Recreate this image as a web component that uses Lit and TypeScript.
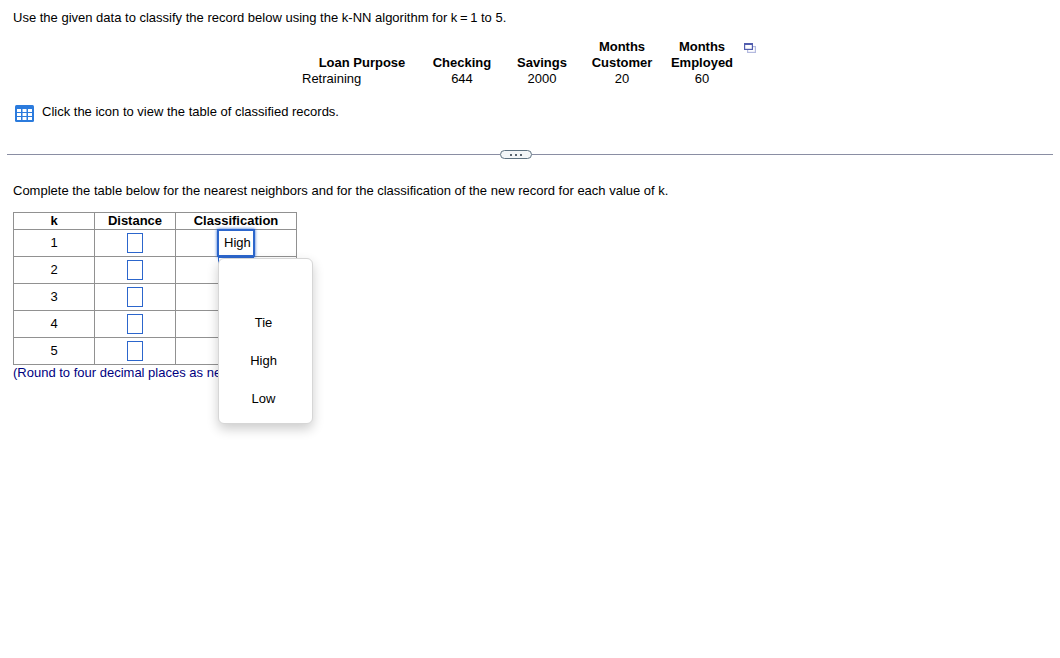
import { LitElement, html, css } from "lit";
import { customElement, state } from "lit/decorators.js";
import { classMap } from "lit/directives/class-map.js";

const OPTIONS = ["", "Tie", "High", "Low"];

@customElement("answer-select")
class AnswerSelect extends LitElement {
  static properties = {
    value: { type: String },
    label: { type: String },
    open: { type: Boolean },
  };
  declare value: string;
  declare label: string;
  declare open: boolean;

  constructor() {
    super();
    this.value = "";
    this.label = "";
    this.open = false;
  }

  static styles = css`
    :host {
      display: block;
      position: relative;
      width: 36px;
      margin: 0 auto;
    }
    .field {
      display: block;
      appearance: none;
      box-sizing: border-box;
      width: 100%;
      height: 26px;
      margin: 0;
      padding: 0 0 0 5px;
      border: 1px solid #2c66cc;
      border-radius: 0;
      background: #fff;
      color: #000;
      font: inherit;
      outline: none;
    }
    .field.open {
      box-shadow: 0 0 0 1px #2c66cc, 0 0 3px 1px #2c66cc;
    }
    .menu {
      position: absolute;
      z-index: 2;
      top: 28px;
      left: 0;
      box-sizing: border-box;
      width: 95px;
      padding: 6px 0;
      border: 1px solid #d6d6d6;
      border-radius: 6px;
      background: #fff;
      box-shadow: 0 5px 12px rgba(0, 0, 0, 0.2);
    }
    .option {
      display: block;
      width: 100%;
      height: 38px;
      padding: 2px 4px 0 0;
      border: 0;
      background: none;
      color: #000;
      font: inherit;
      text-align: center;
    }
  `;

  private pick(option: string) {
    this.value = option;
    this.open = false;
  }

  render() {
    return html`
      <select
        class=${classMap({ field: true, open: this.open })}
        aria-label=${this.label}
        @mousedown=${(e: Event) => {
          e.preventDefault();
          this.open = !this.open;
        }}
      >
        ${OPTIONS.map((o) => html`<option ?selected=${o === this.value}>${o}</option>`)}
      </select>
      ${this.open
        ? html`<div class="menu" role="listbox" aria-label=${this.label}>
            ${OPTIONS.map(
              (o) => html`<button
                class="option"
                role="option"
                aria-label=${o || "Blank"}
                aria-selected=${o === this.value ? "true" : "false"}
                @click=${() => this.pick(o)}
              >${o}</button>`
            )}
          </div>`
        : ""}
    `;
  }
}

@customElement("app-root")
class AppRoot extends LitElement {
  @state() private rows = [1, 2, 3, 4, 5];

  static styles = css`
    :host {
      display: block;
      min-height: 100vh;
      background: #fff;
      color: #000;
      font: 13px/16px "Liberation Sans", Arial, sans-serif;
    }
    .section {
      padding: 0 13px;
    }
    p {
      margin: 0;
    }
    .intro {
      padding-top: 10px;
    }
    .record {
      display: flex;
      justify-content: center;
      gap: 2px;
      padding-top: 13px;
    }
    table {
      border-collapse: collapse;
      table-layout: fixed;
      text-align: center;
    }
    th,
    td {
      padding: 0;
    }
    .data {
      width: 440px;
    }
    .data th {
      vertical-align: bottom;
    }
    .data .purpose {
      width: 120px;
    }
    .data td.purpose {
      text-align: left;
    }
    .icon {
      display: block;
      padding: 0;
      border: 0;
      background: none;
    }
    .icon svg {
      display: block;
    }
    .copy {
      align-self: flex-start;
      width: 14px;
      padding-top: 4px;
    }
    .viewer {
      display: flex;
      align-items: flex-start;
      gap: 8px;
      padding: 17px 15px 0;
    }
    .viewer .icon {
      padding-top: 1px;
    }
    .divider {
      display: flex;
      align-items: center;
      padding: 28px 7px 0;
    }
    .divider::before,
    .divider::after {
      content: "";
      flex: 1;
      height: 1px;
      background: #8a8ea3;
    }
    .divider::before {
      flex: 0 0 calc(50% - 30px);
    }
    .pill {
      display: flex;
      align-items: center;
      justify-content: center;
      gap: 3px;
      box-sizing: border-box;
      width: 32px;
      height: 9px;
      padding: 0;
      border: 1px solid #5e7281;
      border-radius: 5px;
      background: #f3f6f8;
    }
    .dot {
      width: 2px;
      height: 2px;
      background: #5a6570;
    }
    .task {
      padding-top: 24px;
    }
    .answers {
      width: 284px;
      margin-top: 13px;
    }
    .answers th,
    .answers td {
      border: 1px solid #919191;
    }
    .answers td {
      height: 26px;
    }
    .narrow {
      width: 80px;
    }
    .entry {
      display: block;
      box-sizing: border-box;
      width: 16px;
      height: 20px;
      margin: 0 auto;
      padding: 0 2px;
      border: 1px solid #2c66cc;
      background: #fff;
      font: inherit;
    }
    .note {
      color: #00007f;
    }
  `;

  render() {
    return html`
      <main>
        <section class="section">
          <p class="intro">Use the given data to classify the record below using the k-NN algorithm for k&#8201;=&#8201;1 to 5.</p>
          <div class="record">
            <table class="data">
              <thead>
                <tr>
                  <th class="purpose">Loan Purpose</th>
                  <th>Checking</th>
                  <th>Savings</th>
                  <th>Months Customer</th>
                  <th>Months Employed</th>
                </tr>
              </thead>
              <tbody>
                <tr>
                  <td class="purpose">Retraining</td>
                  <td>644</td>
                  <td>2000</td>
                  <td>20</td>
                  <td>60</td>
                </tr>
              </tbody>
            </table>
            <button class="icon copy" aria-label="Open data">
              <svg width="12" height="10" viewBox="0 0 12 10">
                <rect x="3.6" y="3.6" width="7.8" height="5.8" fill="#fff" stroke="#b4badf" stroke-width="1.2" />
                <rect x="0.6" y="0.6" width="7.8" height="5.8" fill="#fff" stroke="#525eae" stroke-width="1.2" />
                <rect width="9" height="2" fill="#525eae" />
              </svg>
            </button>
          </div>
        </section>
        <div class="viewer">
          <button class="icon" aria-label="View the table of classified records">
            <svg width="19" height="17" viewBox="0 0 19 17">
              <rect width="19" height="17" rx="1.5" fill="#2b7bdd" />
              <path fill="#fff" d="M2 4h4v3H2zM7.5 4h4v3h-4zM13 4h4v3h-4zM2 8h4v3H2zM7.5 8h4v3h-4zM13 8h4v3h-4zM2 12h4v3H2zM7.5 12h4v3h-4zM13 12h4v3h-4z" />
            </svg>
          </button>
          <p>Click the icon to view the table of classified records.</p>
        </div>
        <div class="divider">
          <button class="pill" aria-label="Toggle question details">
            <span class="dot"></span><span class="dot"></span><span class="dot"></span>
          </button>
        </div>
        <section class="section">
          <p class="task">Complete the table below for the nearest neighbors and for the classification of the new record for each value of k.</p>
          <table class="answers">
            <thead>
              <tr>
                <th class="narrow">k</th>
                <th class="narrow">Distance</th>
                <th>Classification</th>
              </tr>
            </thead>
            <tbody>
              ${this.rows.map(
                (k) => html`<tr>
                  <td>${k}</td>
                  <td><input class="entry" type="text" aria-label="Distance for k = ${k}" /></td>
                  <td>
                    <answer-select
                      .value=${k === 1 ? "High" : ""}
                      .open=${k === 1}
                      .label=${`Classification for k = ${k}`}
                    ></answer-select>
                  </td>
                </tr>`
              )}
            </tbody>
          </table>
          <p class="note">(Round to four decimal places as needed.)</p>
        </section>
      </main>
    `;
  }
}
